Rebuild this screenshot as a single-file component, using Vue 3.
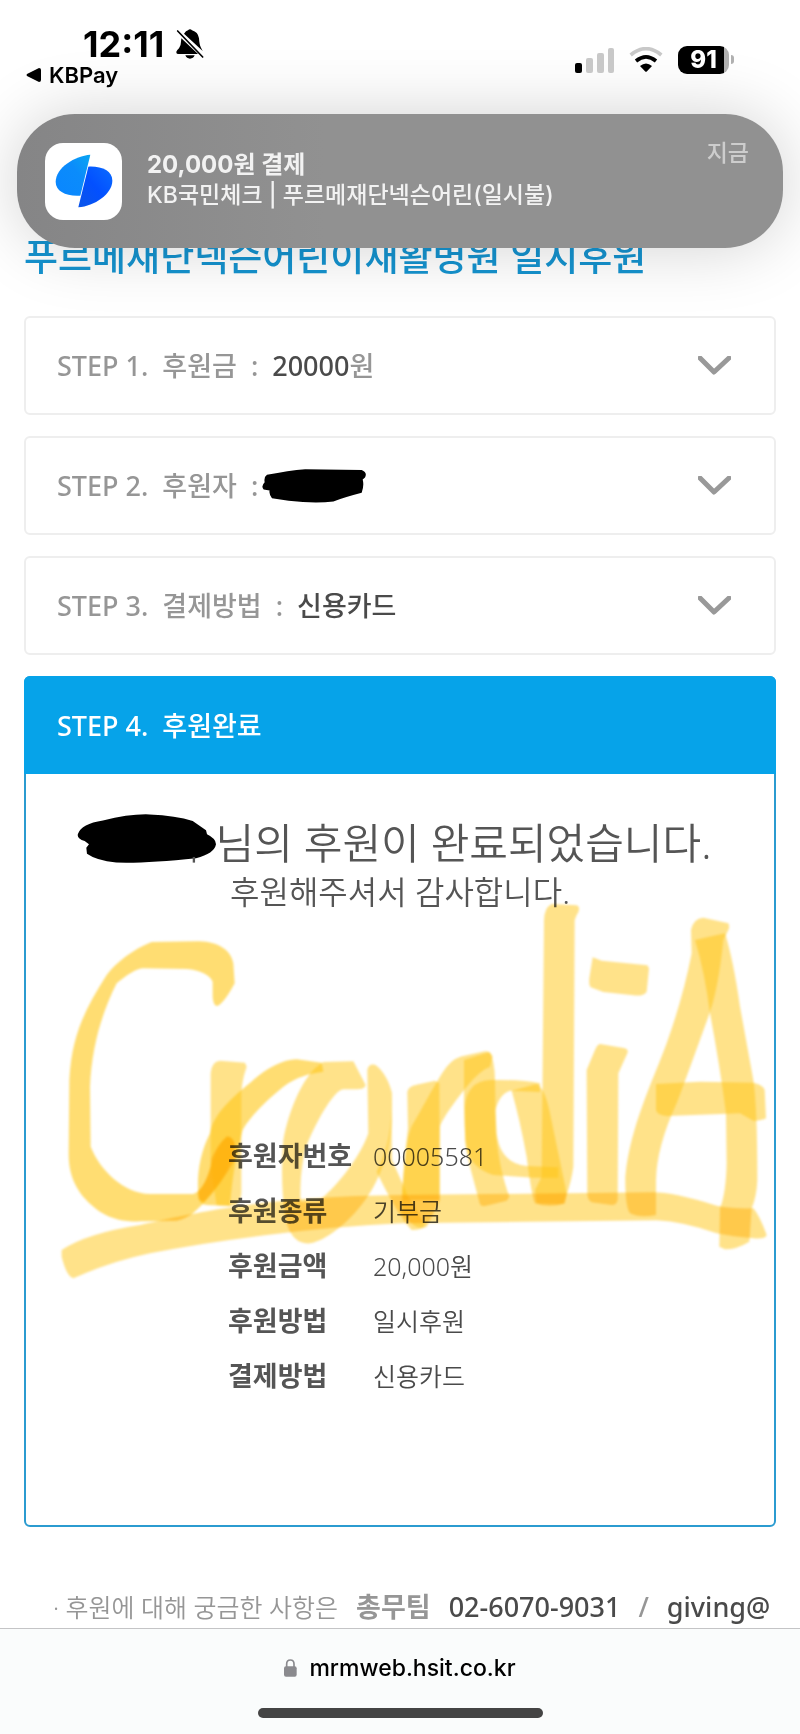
<script setup>
const steps = [
  { no: 1, label: '후원금', value: '20000', unit: '원' },
  { no: 2, label: '후원자', hidden: true },
  { no: 3, label: '결제방법', value: '신용카드' }
]

const details = [
  ['후원자번호', '00005581'],
  ['후원종류', '기부금'],
  ['후원금액', '20,000원'],
  ['후원방법', '일시후원'],
  ['결제방법', '신용카드']
]
</script>

<template>
  <div class="screen">
    <header class="status">
      <div class="status-left">
        <div class="clock">
          <span>12:11</span>
          <svg width="28" height="30" viewBox="0 0 84 90" aria-hidden="true">
            <path d="M16 28 L66 75 H8 Q0 75 1 68 Q3 64 9 58 Q15 50 15 38 Z M24 14 Q30 5 36 4 Q42 -2 48 4 Q66 9 69 28 Q70 48 75 56 L80 66 Z M28 79 H56 Q52 89 42 89 Q32 89 28 79 Z" />
            <path class="slash" d="M5 6 L80 84" />
          </svg>
        </div>
        <a class="back" href="#">
          <svg width="15" height="14" viewBox="0 0 15 14" aria-hidden="true">
            <path d="M1 6 L13 0 Q15 0 15 2 V12 Q15 14 13 14 L1 8 Q0 7 1 6 Z" />
          </svg>
          KBPay
        </a>
      </div>
      <div class="status-right">
        <svg width="39" height="26" viewBox="0 0 39 26" aria-hidden="true">
          <rect x="0" y="16" width="7" height="10" rx="2" />
          <rect class="dim" x="11" y="11" width="7" height="15" rx="2" />
          <rect class="dim" x="22" y="6" width="7" height="20" rx="2" />
          <rect class="dim" x="33" y="1" width="6" height="25" rx="2" />
        </svg>
        <svg width="34" height="26" viewBox="0 0 102 78" aria-hidden="true">
          <path class="arc dim-arc" d="M5 24 Q51 -14 97 24" />
          <path class="arc" d="M21 42 Q51 17 81 42" />
          <path d="M33 57 Q51 42 69 57 L54 73 Q51 76 48 73 Z" />
        </svg>
        <div class="battery"><span>91</span></div>
      </div>
    </header>

    <aside class="notice">
      <div class="app-icon">
        <svg width="58" height="54" viewBox="0 0 174 162" aria-hidden="true">
          <defs>
            <linearGradient id="wing-left" x1="0" y1="1" x2="1" y2="0">
              <stop offset="0" stop-color="#0a86ff" />
              <stop offset="0.6" stop-color="#0b8cfb" />
              <stop offset="1" stop-color="#08a6f2" />
            </linearGradient>
            <linearGradient id="wing-right" x1="0" y1="1" x2="1" y2="0">
              <stop offset="0" stop-color="#0b55e8" />
              <stop offset="0.5" stop-color="#0350ff" />
              <stop offset="1" stop-color="#0a6cff" />
            </linearGradient>
          </defs>
          <path fill="url(#wing-left)" d="M106 2 C60 6 2 40 2 84 C2 112 34 128 76 125 Z" />
          <path fill="url(#wing-right)" d="M100 38 C140 36 172 50 172 80 C172 120 118 156 70 160 Z" />
        </svg>
      </div>
      <div class="notice-text">
        <strong>20,000원 결제</strong>
        <span>KB국민체크 | 푸르메재단넥슨어린(일시불)</span>
      </div>
      <time>지금</time>
    </aside>

    <main>
      <h1>푸르메재단넥슨어린이재활병원 일시후원</h1>

      <div class="steps">
        <button v-for="s in steps" :key="s.no" type="button" class="step">
          <span class="step-title">
            <span>STEP {{ s.no }}.</span>
            <span>{{ s.label }}</span>
            <span>:</span>
            <span v-if="s.value"><b>{{ s.value }}</b>{{ s.unit }}</span>
            <svg v-if="s.hidden" class="scribble" width="104" height="34" viewBox="770 541 313 101" aria-hidden="true">
              <path d="M785 558 Q850 545 900 541 L1070 543 Q1088 550 1080 566 L1073 572 Q1078 590 1070 612 Q1020 625 985 638 Q930 645 850 636 L800 628 Q790 615 793 605 L775 602 Q766 592 778 580 Q775 565 785 558 Z" />
            </svg>
          </span>
          <svg class="chevron" width="33" height="19" viewBox="0 0 33 19" aria-hidden="true">
            <path d="M2 2 L16 16 L31 2" />
          </svg>
        </button>

        <section class="done">
          <h2 class="step-title">
            <span>STEP 4.</span>
            <span>후원완료</span>
          </h2>
          <div class="done-body">
            <p class="done-title">
              <svg width="139" height="49" viewBox="242 461 418 147" aria-hidden="true">
                <path d="M245 520 Q255 490 320 480 Q400 460 460 462 Q540 465 590 482 L604 492 L630 510 L633 522 Q660 535 660 552 Q655 580 600 594 Q450 610 360 607 Q300 600 272 580 L270 562 L278 552 L265 542 Q240 535 245 520 Z" />
                <rect class="tail" x="590" y="590" width="7" height="17" />
              </svg>
              <span>님의 후원이 완료되었습니다.</span>
            </p>
            <p class="done-sub">후원해주셔서 감사합니다.</p>

            <table>
              <tbody>
                <tr v-for="[name, value] in details" :key="name">
                  <th scope="row">{{ name }}</th>
                  <td>{{ value }}</td>
                </tr>
              </tbody>
            </table>

            <!-- highlighter strokes over the receipt -->
            <svg class="marker" viewBox="78 -378 2244 1620" aria-hidden="true">
              <path class="heavy" d="M652 318 Q672 310 704 250 L700 190 C690 140 640 124 590 124 L455 126 C400 148 350 185 320 225 C260 320 215 400 208 540 L206 760 C205 850 250 900 300 935 C340 960 380 966 430 964 L530 962 C570 955 590 930 620 900 C655 860 690 820 704 730 Q695 708 680 710 Q655 730 635 790 C620 840 610 870 580 882 L450 882 C370 880 300 810 272 740 L270 560 C275 450 300 350 350 250 C380 225 410 205 430 205 L560 207 C600 210 630 225 638 245 L638 290 Q640 318 652 318 Z" />
              <path d="M632 520 Q635 484 660 482 L735 488 L740 500 Q722 550 724 600 L724 880 Q720 920 690 918 L650 916 L632 800 Z" />
              <path class="heavy" d="M595 890 C590 820 600 760 630 700 C640 640 700 590 760 540 C800 505 850 478 890 478 L965 488 L970 515 C930 520 890 530 850 560 C800 600 750 650 728 690 C715 740 700 800 690 918 L620 915 Q597 912 595 890 Z" />
              <path class="deep" d="M680 710 Q655 730 635 775 L632 800 Q618 850 594 875 L596 895 Q600 905 612 905 Q665 850 704 780 V730 Q695 708 680 710 Z" />
              <path d="M970 486 L1060 484 L1097 555 Q1095 568 1070 568 L1030 568 C1000 570 940 680 915 750 C903 810 900 850 902 905 L955 905 C1020 850 1080 770 1105 700 L1102 510 Q1105 490 1125 494 C1150 510 1170 550 1176 580 L1176 660 C1170 750 1140 850 1080 920 C1040 970 980 1020 930 1030 Q880 1035 860 970 C845 900 843 800 850 720 C865 640 900 550 945 505 Z" />
              <path d="M1174 590 L1176 780 L1225 890 L1275 975 Q1270 990 1235 990 Q1190 940 1130 815 Q1180 720 1174 590 Z" />
              <g transform="translate(1200 -60)">
                <path d="M22 635 Q25 618 50 614 L105 602 L118 610 L120 960 L80 1040 Q60 1050 40 1035 L5 1000 L5 950 Q14 830 24 745 Z" />
                <path d="M8 960 C10 850 20 760 40 730 C70 680 110 600 140 560 Q165 530 200 526 L255 514 Q272 514 278 530 L270 560 Q240 570 200 620 C160 670 125 720 120 740 L118 960 Z" />
                <path d="M192 540 L268 516 Q284 540 285 600 L288 760 C295 840 310 900 328 950 L320 962 L255 978 Q240 980 238 965 L210 860 Q190 780 192 640 Z" />
                <path d="M420 610 Q370 598 270 600 Q200 605 195 680 L195 780 Q200 860 280 885 L400 893 L475 893 L475 862 L380 858 Q300 850 290 760 L286 690 Q300 640 330 632 L420 636 Z" />
                <path d="M335 632 L410 612 Q435 625 450 700 L500 940 L495 970 Q450 985 405 970 Q395 950 380 830 Q360 720 335 632 Z" />
                <path d="M432 130 Q430 85 455 72 L530 76 Q545 82 530 105 L524 120 L520 860 Q515 900 498 950 L490 972 L410 970 L405 930 L425 890 Z" />
                <path d="M600 492 L675 505 Q687 510 682 520 L655 580 L653 960 Q650 975 635 975 L575 967 Q562 960 562 940 L560 570 L585 510 Q592 494 600 492 Z" />
                <path d="M578 232 L605 242 L742 256 L747 265 L740 335 Q730 350 700 346 L610 336 L572 322 Q566 315 568 295 Z" />
                <path d="M873 150 Q880 115 910 113 L985 130 Q990 140 985 150 L970 180 Q955 330 925 410 Q860 590 830 670 Q770 800 768 900 L768 1005 Q720 1015 690 1000 Q675 980 676 890 C690 740 760 600 800 490 Q850 350 875 220 Z" />
                <path d="M885 180 L975 160 Q1000 240 1020 380 L1060 600 Q1072 680 1072 900 Q1070 950 1055 985 L1048 1085 Q1010 1108 975 1108 L958 1100 L960 985 Q978 940 980 850 L978 700 Q960 560 930 400 Q915 280 885 180 Z" />
                <path d="M768 612 L900 605 L1060 608 Q1090 615 1094 630 L1098 715 Q1080 724 1060 722 L1020 700 L800 708 Q770 705 768 690 Z" />
              </g>
              <path class="underline" d="M185 1050 Q260 1000 420 975 C600 935 800 890 1200 885 L1960 877 Q2020 877 2150 917 Q2200 927 2260 925 Q2278 945 2300 1005 Q2297 1018 2260 1015 Q2200 1010 2150 1000 Q2050 965 1970 961 L1200 970 Q1000 980 800 1005 Q600 1030 450 1060 Q330 1085 220 1135 Q200 1130 185 1070 Z" />
            </svg>
          </div>
        </section>
      </div>

      <p class="contact">
        <span class="ask">· 후원에 대해 궁금한 사항은</span>
        <span class="team">총무팀</span>
        <a href="tel:02-6070-9031">02-6070-9031</a>
        <span>/</span>
        <a href="#">giving@</a>
      </p>
    </main>

    <footer class="toolbar">
      <div class="address">
        <svg width="13" height="18" viewBox="0 0 39 54" aria-hidden="true">
          <rect x="0" y="22" width="38" height="31" rx="6" />
          <path d="M8 26 V15 Q8 3 19 3 Q30 3 30 15 V26" />
        </svg>
        <span>mrmweb.hsit.co.kr</span>
      </div>
      <div class="home-bar"></div>
    </footer>
  </div>
</template>

<style>
body {
  margin: 0;
  background: #fff;
}
</style>

<style scoped>
.screen {
  position: relative;
  display: flex;
  flex-direction: column;
  min-height: 100vh;
  overflow: hidden;
  font-family: "Noto Sans", "Noto Sans CJK KR", sans-serif;
  color: #4a4a4a;
}

svg {
  display: block;
  flex: none;
}

h1,
h2,
p {
  margin: 0;
}

/* status bar */
.status {
  position: relative;
  z-index: 2;
  display: flex;
  justify-content: space-between;
  align-items: flex-start;
  height: 90px;
  padding: 24px 71px 0 26px;
  box-sizing: border-box;
  font-family: Inter, "Noto Sans CJK KR", sans-serif;
  color: #000;
}

.clock {
  display: flex;
  align-items: center;
  gap: 12px;
  padding-left: 57px;
  font-size: 36px;
  font-weight: 700;
  line-height: 40px;
}

.slash {
  fill: none;
  stroke: #000;
  stroke-width: 5;
  stroke-linecap: round;
}

.back {
  display: flex;
  align-items: center;
  gap: 8px;
  font-size: 22px;
  font-weight: 600;
  line-height: 22px;
  color: #000;
  text-decoration: none;
}

.status-right {
  display: flex;
  align-items: center;
  gap: 15px;
  padding-top: 22px;
}

.dim {
  fill: #c8c8c8;
}

.arc {
  fill: none;
  stroke: #000;
  stroke-width: 11;
}

.dim-arc {
  stroke: #c8c8c8;
}

.battery {
  position: relative;
  width: 51px;
  height: 28px;
  border-radius: 9px;
  background: linear-gradient(90deg, #000 91%, #b0b0b0 91%);
  color: #fff;
  font-size: 24px;
  font-weight: 800;
  line-height: 28px;
  text-align: center;
}

.battery::after {
  content: "";
  position: absolute;
  top: 9px;
  right: -5px;
  width: 3px;
  height: 9px;
  border-radius: 0 4px 4px 0;
  background: #b0b0b0;
}

/* notification banner lies over the page */
.notice {
  position: absolute;
  z-index: 1;
  top: 114px;
  left: 17px;
  right: 17px;
  display: flex;
  align-items: center;
  gap: 25px;
  height: 134px;
  padding: 0 34px 0 28px;
  box-sizing: border-box;
  border-radius: 58px;
  background: linear-gradient(90deg, #858586, #919191 40%);
  box-shadow: 0 0 66px rgba(0, 0, 0, 0.18);
  font-family: Inter, "Noto Sans CJK KR", sans-serif;
  font-size: 23px;
  line-height: 30px;
  color: #f2f2f2;
}

.app-icon {
  display: flex;
  align-items: center;
  justify-content: center;
  width: 77px;
  height: 77px;
  border-radius: 18px;
  background: #fff;
}

.notice-text {
  display: flex;
  flex: 1;
  flex-direction: column;
  padding-bottom: 2px;
  font-weight: 500;
}

.notice-text strong {
  font-size: 24px;
  font-weight: 700;
}

.notice time {
  align-self: flex-start;
  padding-top: 24px;
  font-weight: 500;
  color: #cdcdcd;
}

/* page */
main {
  padding: 145px 24px 0;
}

h1 {
  margin-bottom: 37px;
  font-size: 37px;
  font-weight: 500;
  line-height: 44px;
  color: #1593cf;
  white-space: nowrap;
}

.steps {
  display: flex;
  flex-direction: column;
  gap: 21px;
}

.step {
  display: flex;
  align-items: center;
  justify-content: space-between;
  height: 99px;
  padding: 0 43px 0 31px;
  border: 2px solid #eee;
  border-radius: 6px;
  background: #fff;
  font: inherit;
  font-size: 27px;
  font-weight: 500;
  line-height: 40px;
  color: #969696;
}

.step-title {
  display: flex;
  align-items: center;
  gap: 14px;
}

.step b {
  font-weight: 500;
  color: #4a4a4a;
}

/* covers the donor name right up to the colon */
.scribble {
  margin-left: -10px;
}

.chevron {
  fill: none;
  stroke: #999;
  stroke-width: 5;
  stroke-linecap: round;
  stroke-linejoin: round;
}

.done {
  border: 2px solid #2b9bd0;
  border-radius: 6px;
  background: #fff;
}

h2 {
  margin: -2px -2px 0;
  padding: 2px 33px 0;
  border-radius: 6px 6px 0 0;
  background: #06a3e9;
  font-size: 27px;
  font-weight: 500;
  line-height: 96px;
  color: #fff;
}

.done-body {
  position: relative;
  padding: 40px 0 122px;
}

.done-title {
  display: flex;
  justify-content: center;
  padding-right: 12px;
  font-size: 42px;
  font-weight: 350;
  line-height: 58px;
  color: #555;
  white-space: nowrap;
}

.tail {
  fill: #555;
}

.done-sub {
  font-size: 32px;
  font-weight: 350;
  line-height: 40px;
  text-align: center;
  color: #555;
}

table {
  width: 344px;
  margin: 216px auto 0;
  border-collapse: collapse;
}

th,
td {
  height: 55px;
  padding: 0;
  line-height: 40px;
  text-align: left;
}

th {
  width: 145px;
  font-size: 27px;
  font-weight: 700;
  color: #555;
}

td {
  font-size: 25px;
  font-weight: 350;
}

.marker {
  position: absolute;
  top: 0;
  left: 0;
  width: 100%;
  fill: #ffc614;
  fill-opacity: 0.5;
  filter: blur(1px);
  mix-blend-mode: multiply;
  pointer-events: none;
}

.marker .heavy {
  fill-opacity: 0.6;
}

.marker .deep {
  fill: #ffa000;
}

.marker .underline {
  mix-blend-mode: multiply;
}

.contact {
  display: flex;
  align-items: baseline;
  gap: 18px;
  margin-top: 60px;
  padding-left: 29px;
  font-size: 27px;
  font-weight: 500;
  line-height: 40px;
  white-space: nowrap;
  color: #969696;
}

.contact .ask {
  font-size: 25px;
  font-weight: 350;
}

.contact .team {
  font-weight: 700;
}

.contact a {
  color: #4a4a4a;
  text-decoration: none;
}

/* browser toolbar */
.toolbar {
  display: flex;
  flex-direction: column;
  align-items: center;
  gap: 24px;
  margin-top: auto;
  padding: 23px 0 16px;
  border-top: 1px solid #c4c4c6;
  background: #fafcfc;
}

.address {
  display: flex;
  align-items: center;
  gap: 12px;
  font-family: Inter, sans-serif;
  font-size: 23px;
  font-weight: 500;
  line-height: 32px;
  color: #000;
}

.address rect {
  fill: #8a8a8e;
}

.address path {
  fill: none;
  stroke: #8a8a8e;
  stroke-width: 5;
}

.home-bar {
  width: 285px;
  height: 10px;
  border-radius: 5px;
  background: #444;
}
</style>
